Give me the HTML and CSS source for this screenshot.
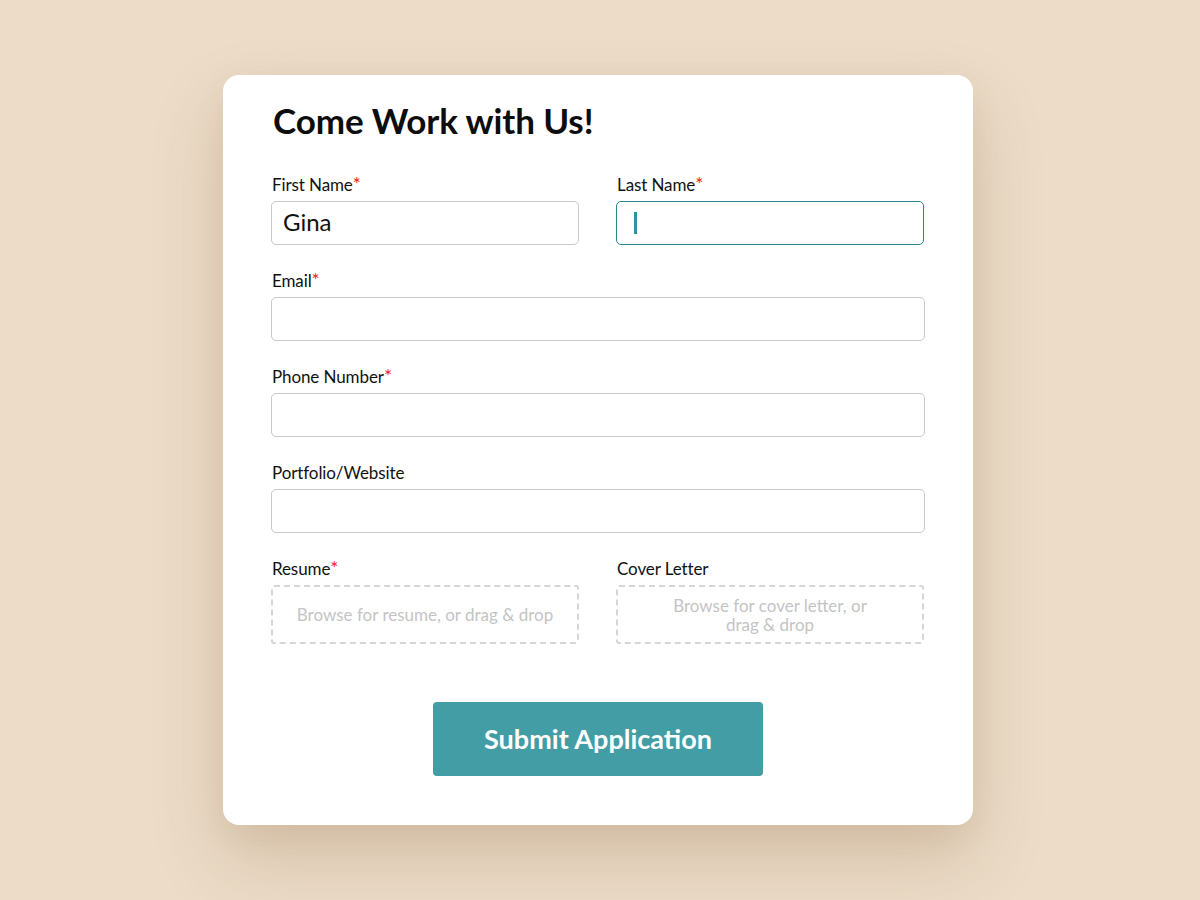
FILE: index.html
```html
<!DOCTYPE html>
<html lang="en">
<head>
<meta charset="utf-8">
<title>Come Work with Us!</title>
<link rel="stylesheet" href="styles.css">
</head>
<body>
<main class="page">
  <form class="card">
    <h1 class="title">Come Work with Us!</h1>

    <div class="row two">
      <div class="field">
        <label class="label">First Name<span class="req">*</span></label>
        <div class="input">Gina</div>
      </div>
      <div class="field">
        <label class="label">Last Name<span class="req">*</span></label>
        <div class="input focused"><span class="caret"></span></div>
      </div>
    </div>

    <div class="row">
      <div class="field">
        <label class="label">Email<span class="req">*</span></label>
        <div class="input"></div>
      </div>
    </div>

    <div class="row">
      <div class="field">
        <label class="label">Phone Number<span class="req">*</span></label>
        <div class="input"></div>
      </div>
    </div>

    <div class="row">
      <div class="field">
        <label class="label">Portfolio/Website</label>
        <div class="input"></div>
      </div>
    </div>

    <div class="row two">
      <div class="field">
        <label class="label">Resume<span class="req">*</span></label>
        <div class="drop">Browse for resume, or drag &amp; drop</div>
      </div>
      <div class="field">
        <label class="label">Cover Letter</label>
        <div class="drop">Browse for cover letter, or<br>drag &amp; drop</div>
      </div>
    </div>

    <div class="actions">
      <button type="button" class="submit">Submit Application</button>
    </div>
  </form>
</main>
</body>
</html>
```

FILE: styles.css
```css
* { box-sizing: border-box; }

html, body {
  margin: 0;
  height: 100%;
}

body {
  background: #ecdcc8;
  font-family: "Lato", "Open Sans", sans-serif;
  color: #111;
}

.page {
  height: 900px;
  display: flex;
  justify-content: center;
  padding: 75px 4px 0 0;
}

.card {
  width: 750px;
  height: 750px;
  background: #fff;
  border-radius: 16px;
  padding: 20px 48px 0 48px;
  box-shadow: 0 34px 70px rgba(130, 95, 55, 0.22), 0 10px 30px rgba(130, 95, 55, 0.08);
}

.title {
  margin: 0 0 30px 2px;
  font-size: 35px;
  line-height: 50px;
  font-weight: 700;
  letter-spacing: -0.1px;
  color: #0d0d0d;
}

.row {
  margin-bottom: 26px;
}

.row.two {
  display: grid;
  grid-template-columns: 308px 308px;
  column-gap: 37px;
}

.field {
  display: flex;
  flex-direction: column;
}

.label {
  font-size: 17px;
  line-height: 20px;
  margin: 0 0 6px 1px;
  letter-spacing: -0.1px;
  color: #111;
}

.req {
  color: #f01a1a;
  font-size: 19px;
  line-height: 0;
}

.input {
  height: 44px;
  border: 1.5px solid #c9c9c9;
  border-radius: 5px;
  padding: 0 11px 3px;
  display: flex;
  align-items: center;
  font-size: 24px;
  color: #111;
}

.input.focused {
  border-color: #26868e;
  padding: 0 0 1px 17px;
}

.caret {
  width: 3px;
  height: 22px;
  background: #2b959c;
}

.drop {
  height: 59px;
  border: 2px dashed #d6d6d6;
  border-radius: 3px;
  display: flex;
  align-items: center;
  justify-content: center;
  text-align: center;
  font-size: 17px;
  line-height: 19px;
  color: #c4c4c4;
}

.actions {
  display: flex;
  justify-content: center;
  padding-top: 32px;
}

.submit {
  width: 330px;
  height: 74px;
  border: none;
  border-radius: 4px;
  background: #429da5;
  color: #fff;
  font-family: "Lato", "Open Sans", sans-serif;
  font-size: 27px;
  font-weight: 700;
  line-height: 1;
  padding-bottom: 2px;
  cursor: pointer;
}
```
